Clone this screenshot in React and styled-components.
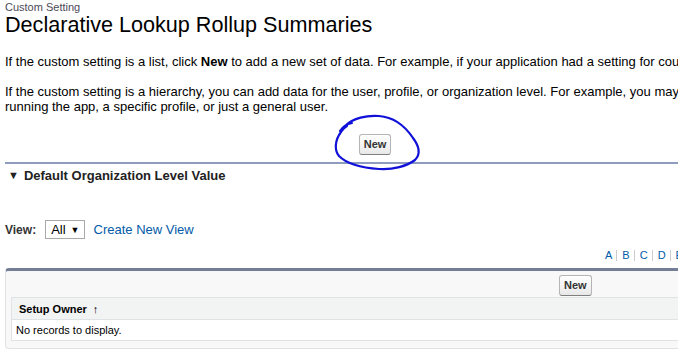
import styled, { createGlobalStyle } from "styled-components";

const Global = createGlobalStyle`
  html, body {
    margin: 0;
    padding: 0;
    background: #fff;
    overflow: hidden;
  }
  body {
    font-family: Arial, "Liberation Sans", sans-serif;
    color: #000;
  }
`;

const Page = styled.div`
  width: 678px;
  height: 363px;
  overflow: hidden;
  padding-left: 5px;
  box-sizing: border-box;
`;

const Wide = styled.div`
  width: 1000px;
`;

const Eyebrow = styled.div`
  font-size: 11px;
  color: #4a4a56;
  padding-top: 2px;
  line-height: 11px;
`;

const Title = styled.h1`
  margin: 0;
  font-size: 21.6px;
  font-weight: normal;
  line-height: 24px;
  color: #000;
`;

const Para = styled.p`
  margin: ${(p) => p.$top}px 0 0;
  font-size: 13px;
  line-height: 15px;
  color: #000;
  white-space: nowrap;
`;

const Center = styled.div`
  width: 740px;
  display: flex;
  justify-content: center;
  padding-top: 20px;
  position: relative;
`;

const Btn = styled.button`
  font-family: Arial, "Liberation Sans", sans-serif;
  font-size: 11px;
  font-weight: bold;
  color: #333;
  padding: 4px 4px;
  border: 1px solid #b5b5b5;
  border-bottom-color: #7f7f7f;
  border-radius: 3px;
  background: linear-gradient(#fff, #f2f2f2 60%, #e8e8e8);
  height: 21px;
  line-height: 11px;
  margin-left: ${(p) => p.$left || 0}px;
`;

const Scribble = styled.svg`
  position: absolute;
  left: 328px;
  top: 0;
  pointer-events: none;
  overflow: visible;
`;

const Rule = styled.div`
  height: 2px;
  background: #8e9dbe;
  margin-top: 7px;
`;

const SectionHead = styled.div`
  display: flex;
  align-items: center;
  gap: 5px;
  padding: 4px 0 0 3px;
  font-size: 13px;
  font-weight: bold;
  color: #222;
`;

const Caret = styled.span`
  font-size: 11px;
  line-height: 13px;
`;

const ViewRow = styled.div`
  display: flex;
  align-items: center;
  margin-top: 37px;
  font-size: 12px;
`;

const ViewLabel = styled.span`
  font-weight: bold;
  color: #333;
  margin-right: 9px;
`;

const Select = styled.div`
  display: flex;
  align-items: center;
  gap: 5px;
  height: 17px;
  padding: 0 4px 0 5px;
  border: 1px solid #a9a9a9;
  font-size: 13px;
  color: #000;
  margin-right: 9px;
`;

const SmallCaret = styled.span`
  font-size: 9px;
`;

const Link = styled.a`
  color: #015ba7;
  text-decoration: none;
  font-size: 13px;
`;

const Alpha = styled.div`
  display: flex;
  padding-left: 600px;
  margin-top: 11px;
  font-size: 11px;
  color: #015ba7;
`;

const Letter = styled.span`
  padding: 0 4px 0 5px;
  border-right: 1px solid #ccc;
  line-height: 11px;
  &:first-child { padding-left: 0; }
`;

const Box = styled.div`
  margin-top: 7px;
  border-top: 3px solid #747e96;
  border-left: 1px solid #e0e3e5;
  border-bottom: 1px solid #e0e3e5;
  border-radius: 4px 0 0 4px;
  background: #f8f8f8;
  padding: 3px 0 7px 5px;
`;

const BtnBar = styled.div`
  display: flex;
  height: 22px;
  align-items: center;
  padding-bottom: 1px;
`;

const Table = styled.div`
  border: 1px solid #e0e3e5;
  border-right: none;
  background: #fff;
`;

const HeadRow = styled.div`
  background: #f2f3f3;
  border-bottom: 1px solid #e0e3e5;
  height: 21px;
  display: flex;
  align-items: center;
  padding-left: 7px;
  font-size: 11px;
  font-weight: bold;
  color: #000;
`;

const Arrow = styled.span`
  font-weight: normal;
  font-size: 11px;
  margin-left: 6px;
`;

const Row = styled.div`
  height: 20px;
  display: flex;
  align-items: center;
  padding-left: 4px;
  font-size: 11px;
  color: #000;
`;

const letters = "ABCDEFGHIJKLMNOPQRSTUVWXYZ".split("").concat(["Other", "All"]);

export default function App() {
  return (
    <>
      <Global />
      <Page>
        <Wide>
          <Eyebrow>Custom Setting</Eyebrow>
          <Title>Declarative Lookup Rollup Summaries</Title>
          <Para $top={17}>
            If the custom setting is a list, click <b>New</b> to add a new set of data. For example, if your application had a setting for country codes, each set might include the country's name and dialing code.
          </Para>
          <Para $top={15}>
            If the custom setting is a hierarchy, you can add data for the user, profile, or organization level. For example, you may want different values to display depending on who is
            <br />
            running the app, a specific profile, or just a general user.
          </Para>
          <Center>
            <Btn>New</Btn>
            <Scribble width="88" height="58" viewBox="0 0 88 58">
              <path
                d="M12 12 C20 4 34 1 46 2 C60 3 72 12 80 24 C86 32 88 40 82 46 C74 52 60 56 46 55 C30 54 14 50 6 42 C1 36 2 26 8 18 C10 15 12 13 14 12 M7 17 C10 12 14 10 19 9"
                fill="none"
                stroke="#1010d8"
                strokeWidth="2.2"
                strokeLinecap="round"
              />
            </Scribble>
          </Center>
          <Rule />
          <SectionHead>
            <Caret>▼</Caret>
            Default Organization Level Value
          </SectionHead>
          <ViewRow>
            <ViewLabel>View:</ViewLabel>
            <Select>
              All <SmallCaret>▼</SmallCaret>
            </Select>
            <Link href="#">Create New View</Link>
          </ViewRow>
          <Alpha>
            {letters.map((l) => (
              <Letter key={l}>{l}</Letter>
            ))}
          </Alpha>
          <Box>
            <BtnBar>
              <Btn $left={548}>New</Btn>
            </BtnBar>
            <Table>
              <HeadRow>
                Setup Owner <Arrow>↑</Arrow>
              </HeadRow>
              <Row>No records to display.</Row>
            </Table>
          </Box>
        </Wide>
      </Page>
    </>
  );
}
